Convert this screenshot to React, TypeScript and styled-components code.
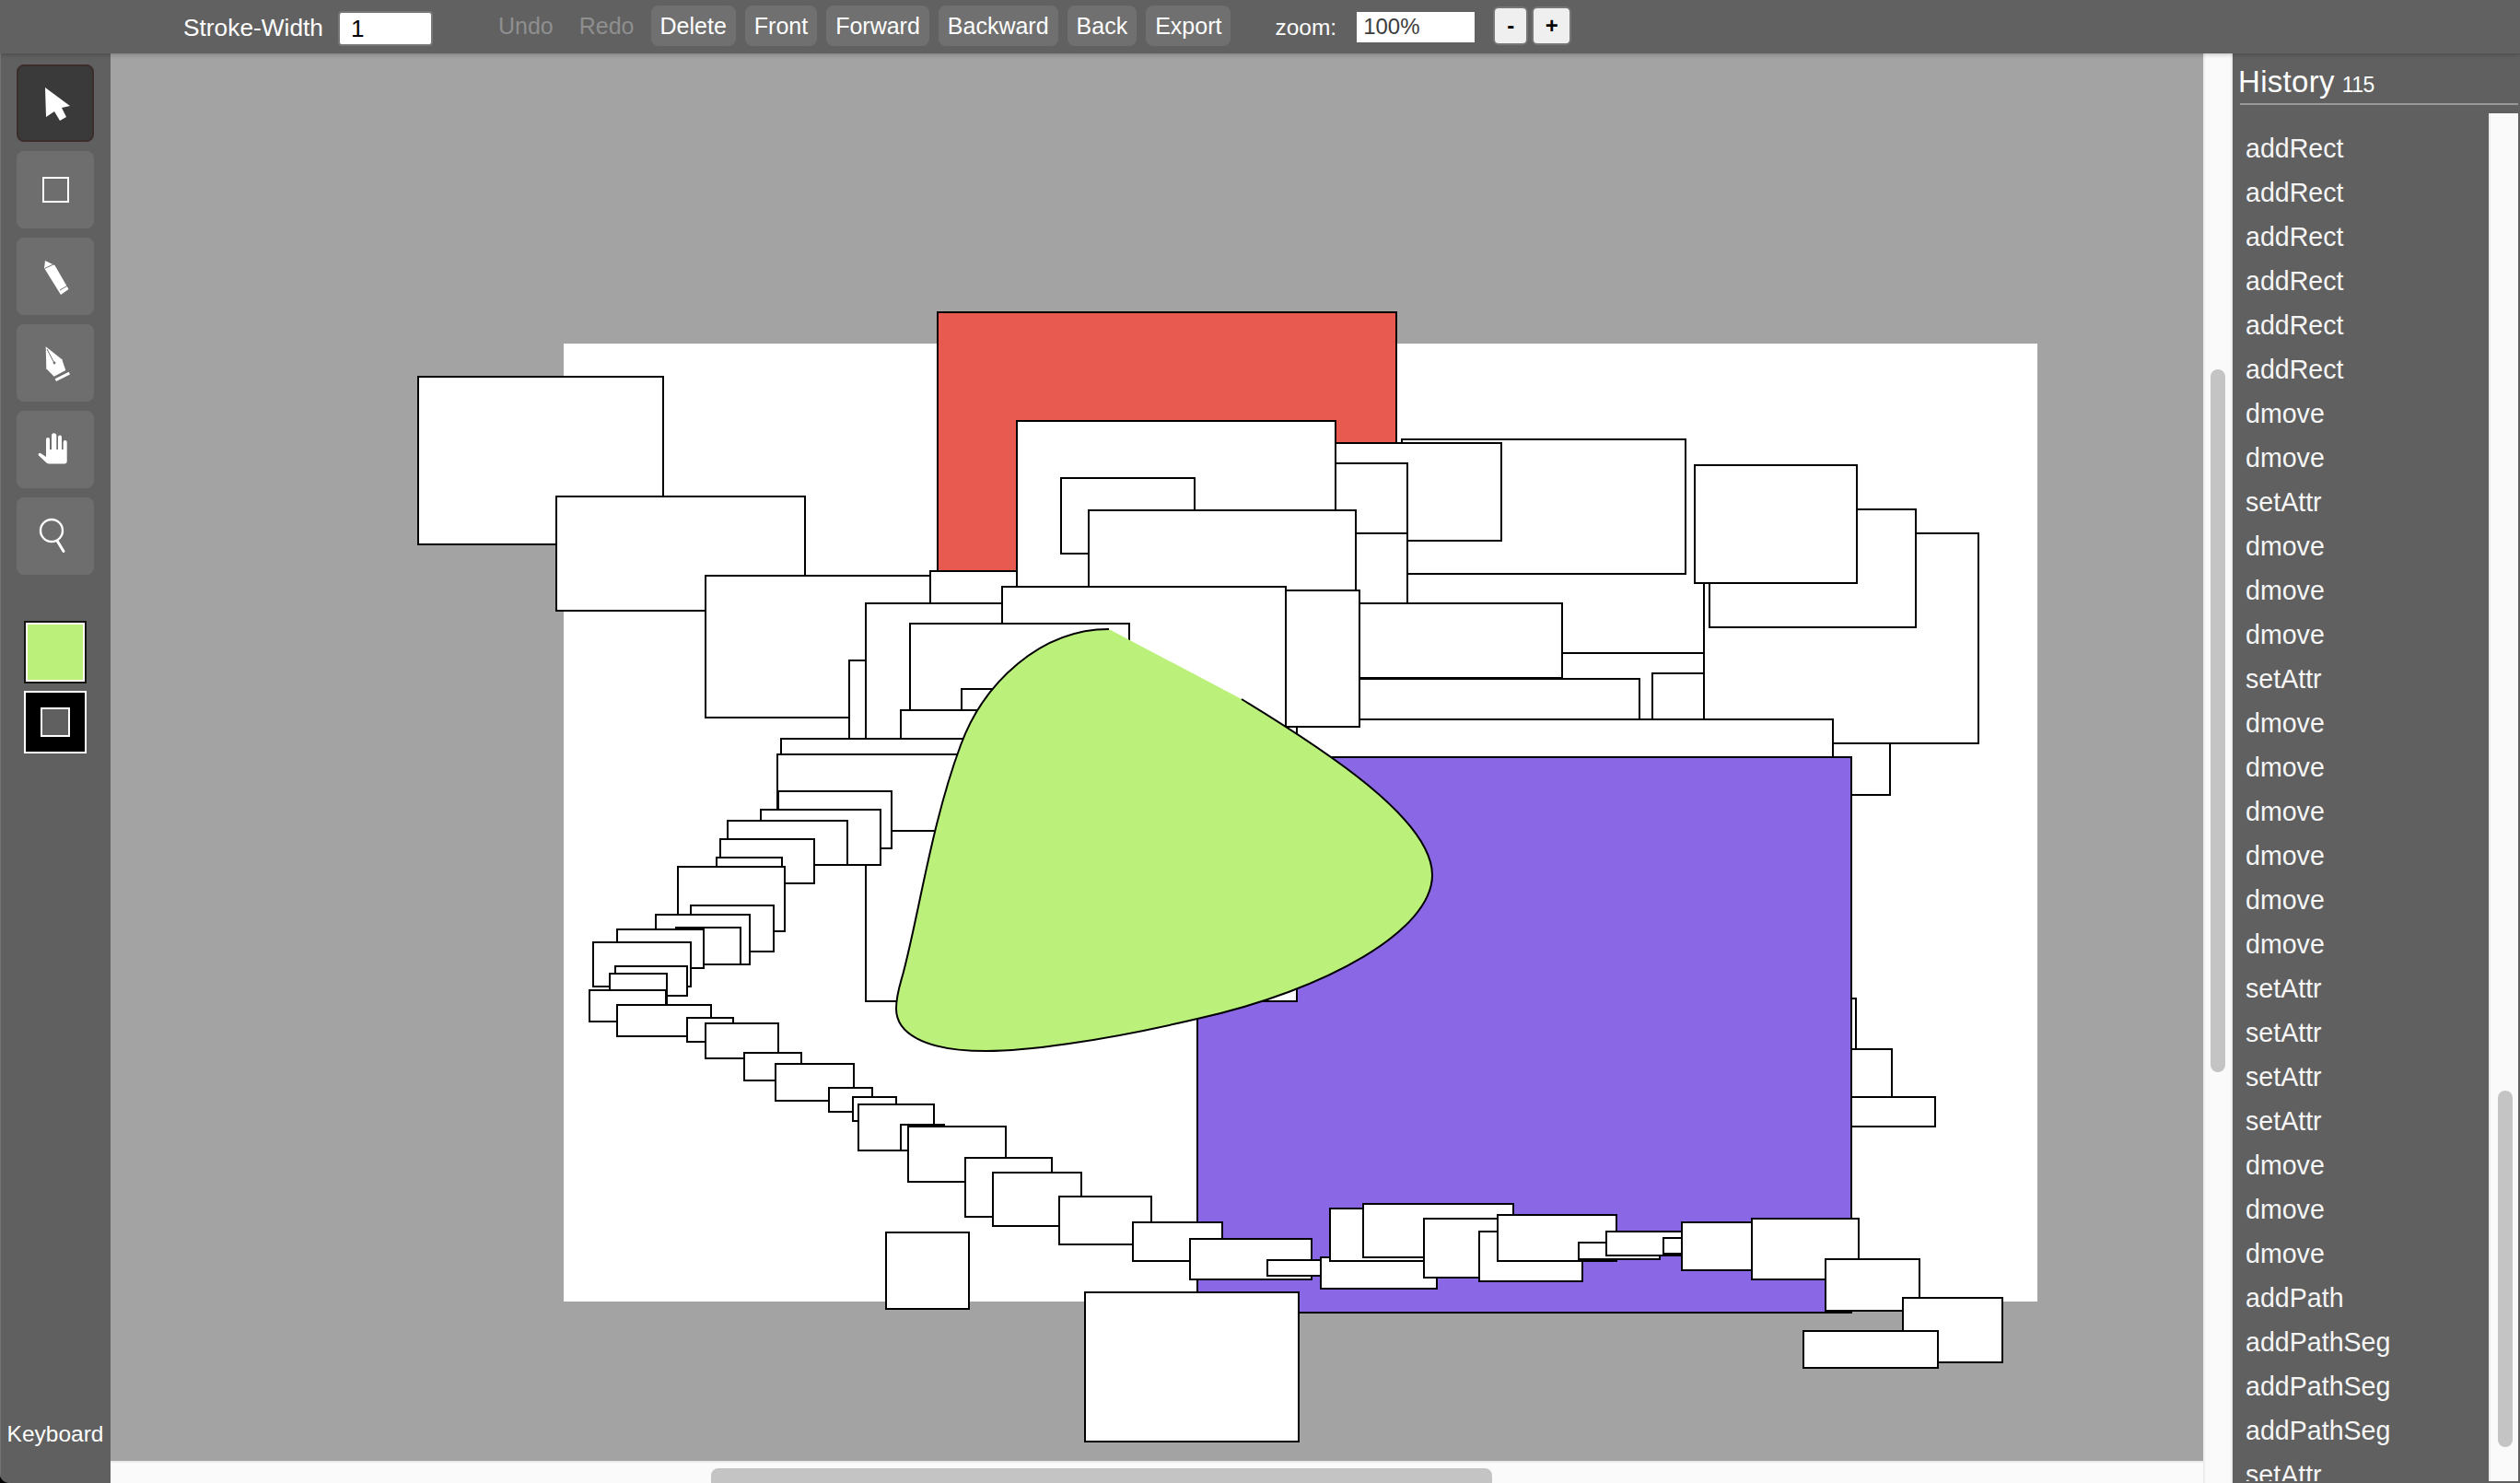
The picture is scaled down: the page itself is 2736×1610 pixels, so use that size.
import React from "react";
import styled, { createGlobalStyle } from "styled-components";

// x1, y1, x2, y2 in page pixels, back to front
type Box = [number, number, number, number];

const backBoxes: Box[] = [
  [454, 409, 720, 591],
  [604, 539, 874, 663],
];
const midBoxes: Box[] = [
  [766, 625, 1020, 779],
  [1010, 620, 1482, 700],
  [1900, 790, 2052, 863],
  [1522, 477, 1830, 623],
  [1400, 481, 1630, 587],
  [1400, 503, 1528, 600],
  [1420, 579, 1528, 680],
  [1500, 709, 1860, 800],
  [1300, 655, 1696, 736],
  [1794, 731, 1860, 800],
  [1850, 579, 2148, 807],
  [1856, 553, 2080, 681],
  [1840, 505, 2016, 633],
  [1300, 737, 1780, 790],
  [1100, 781, 1990, 840],
];
const sideBoxes: Box[] = [
  [1900, 1084, 2015, 1160],
  [1900, 1139, 2054, 1210],
  [1900, 1191, 2101, 1223],
];
const frontBoxes: Box[] = [
  [1104, 457, 1450, 650],
  [1152, 519, 1297, 601],
  [1182, 554, 1472, 680],
  [922, 717, 980, 830],
  [1200, 707, 1284, 790],
  [940, 655, 1408, 1087],
  [1088, 637, 1396, 800],
  [1396, 641, 1476, 789],
  [988, 677, 1226, 780],
  [1044, 748, 1120, 800],
  [978, 771, 1100, 830],
  [848, 802, 1050, 830],
  [844, 819, 1060, 902],
  [845, 859, 968, 921],
  [826, 879, 956, 939],
  [790, 891, 920, 939],
  [782, 911, 884, 959],
  [778, 931, 849, 950],
  [736, 941, 852, 1011],
  [750, 983, 840, 1033],
  [712, 993, 814, 1047],
  [734, 1007, 804, 1047],
  [670, 1009, 764, 1051],
  [644, 1023, 750, 1071],
  [668, 1049, 746, 1081],
  [662, 1057, 724, 1090],
  [640, 1075, 723, 1109],
  [670, 1091, 772, 1125],
  [746, 1105, 796, 1131],
  [766, 1111, 845, 1149],
  [808, 1143, 870, 1173],
  [842, 1155, 927, 1195],
  [900, 1181, 947, 1207],
  [926, 1191, 973, 1217],
  [932, 1199, 1014, 1249],
  [978, 1221, 1025, 1249],
  [986, 1223, 1092, 1283],
  [1048, 1257, 1142, 1321],
  [1078, 1273, 1174, 1331],
  [1150, 1299, 1250, 1351],
  [1230, 1327, 1327, 1369],
  [1292, 1345, 1424, 1389],
  [1376, 1368, 1434, 1385],
  [962, 1338, 1052, 1421],
  [1178, 1403, 1410, 1565],
  [1434, 1365, 1560, 1399],
  [1444, 1312, 1560, 1369],
  [1480, 1307, 1643, 1365],
  [1546, 1323, 1640, 1387],
  [1606, 1337, 1718, 1391],
  [1626, 1319, 1755, 1369],
  [1714, 1349, 1802, 1367],
  [1744, 1337, 1840, 1363],
  [1806, 1344, 1840, 1361],
  [1826, 1327, 1902, 1379],
  [1902, 1323, 2018, 1389],
  [1982, 1367, 2084, 1423],
  [2066, 1409, 2174, 1479],
  [1958, 1445, 2104, 1485],
];

const blobPath =
  "M1348 759 C1440 815 1555 890 1555 950 C1555 1010 1440 1075 1300 1106 C1190 1132 1110 1141 1071 1141 C1000 1141 973 1120 973 1095 C973 1080 977 1070 981 1055 C998 990 1012 892 1043 809 C1068 741 1130 683 1204 683";

const actions = ["Delete", "Front", "Forward", "Backward", "Back", "Export"];

const history = [
  ...Array(6).fill("addRect"),
  "dmove",
  "dmove",
  "setAttr",
  "dmove",
  "dmove",
  "dmove",
  "setAttr",
  ...Array(6).fill("dmove"),
  ...Array(4).fill("setAttr"),
  "dmove",
  "dmove",
  "dmove",
  "addPath",
  "addPathSeg",
  "addPathSeg",
  "addPathSeg",
  "setAttr",
];

const GlobalStyle = createGlobalStyle`
  * {
    box-sizing: border-box;
  }

  html, body {
    margin: 0;
    height: 100%;
    overflow: hidden;
    background: #000;
  }

  #root {
    height: 100%;
  }
`;

const Shell = styled.div`
  height: 100vh;
  display: flex;
  flex-direction: column;
  font-family: "Liberation Sans", Arial, sans-serif;
  color: #fff;
  background: #606060;
  border-bottom-left-radius: 10px;
  overflow: hidden;
`;

const Toolbar = styled.header`
  position: relative;
  z-index: 2;
  flex: 0 0 58px;
  display: flex;
  align-items: center;
  padding-left: 199px;
  background: #616161;
  box-shadow: 0 1px 5px rgba(0, 0, 0, 0.25);
`;

const FieldLabel = styled.label<{ $gap: number; $size: number }>`
  font-size: ${({ $size }) => $size}px;
  margin-left: ${({ $gap }) => $gap}px;
  padding-top: 2px;
`;

const StrokeInput = styled.input`
  width: 103px;
  height: 38px;
  margin: 4px 0 0 16px;
  padding: 0 12px;
  font: 26px "Liberation Sans", Arial, sans-serif;
  color: #000;
  background: #fff;
  border: 2px solid #767676;
  border-radius: 4px;
`;

const ZoomInput = styled.input`
  width: 128px;
  height: 33px;
  margin-left: 22px;
  padding: 0 7px;
  font: 24px "Liberation Sans", Arial, sans-serif;
  color: #3c3c3c;
  background: #fff;
  border: 0;
`;

const ActionGroup = styled.div`
  display: flex;
  gap: 10px;
  margin-left: 61px;
  margin-top: -2px;
`;

const ActionButton = styled.button<{ $off?: boolean }>`
  height: 44px;
  padding: ${({ $off }) => ($off ? "0 8px 0 10px" : "0 10px")};
  font: 25px "Liberation Sans", Arial, sans-serif;
  color: ${({ $off }) => ($off ? "#8f8f8f" : "#fff")};
  background: ${({ $off }) => ($off ? "transparent" : "#707070")};
  border: 0;
  border-radius: 8px;
`;

const StepButton = styled.button<{ $wide?: boolean }>`
  width: ${({ $wide }) => ($wide ? 43 : 38)}px;
  height: 42px;
  margin-top: -2px;
  margin-left: ${({ $wide }) => ($wide ? 4 : 20)}px;
  padding: 0;
  font: bold 24px "Liberation Sans", Arial, sans-serif;
  color: #000;
  background: #efefef;
  border: 2px solid #767676;
  border-radius: 6px;
`;

const Main = styled.div`
  flex: 1;
  min-height: 0;
  display: flex;
`;

const Sidebar = styled.aside`
  flex: 0 0 120px;
  display: flex;
  flex-direction: column;
  align-items: center;
  padding: 12px 0 38px;
  background: #606060;
  box-shadow: inset 1px 0 0 #747474;
`;

const ToolButton = styled.div<{ $active?: boolean }>`
  flex: 0 0 84px;
  width: 84px;
  margin-bottom: 10px;
  background: ${({ $active }) => ($active ? "#3a3a3a" : "#6e6e6e")};
  border: ${({ $active }) => ($active ? "2px solid #3d2c2c" : "0")};
  border-radius: 8px;

  svg {
    display: block;
    margin: ${({ $active }) => ($active ? "-2px" : "0")};
  }
`;

const FillSwatch = styled.div`
  width: 68px;
  height: 68px;
  margin-top: 40px;
  background: #bbf07b;
  border: 4px solid #fff;
  outline: 2px solid #141414;
  outline-offset: -2px;
`;

const StrokeSwatch = styled.div`
  width: 68px;
  height: 68px;
  margin-top: 8px;
  display: flex;
  align-items: center;
  justify-content: center;
  background: #000;
  border: 2px solid #fff;
`;

const StrokeHole = styled.div`
  width: 32px;
  height: 32px;
  background: #606060;
  border: 2px solid #fff;
`;

const KeyboardLabel = styled.div`
  margin-top: auto;
  font-size: 24.5px;
  line-height: 30px;
`;

const CanvasColumn = styled.div`
  flex: 0 0 2272px;
  display: flex;
  flex-direction: column;
`;

const CanvasView = styled.main`
  flex: 1;
  min-height: 0;
  background: #a3a3a3;

  svg {
    display: block;
  }
`;

const HorizontalTrack = styled.div`
  flex: 0 0 24px;
  padding: 6px 0 0 652px;
  background: #fafafa;
  border-top: 2px solid #ececec;
  overflow: hidden;
`;

const HorizontalThumb = styled.div`
  width: 848px;
  height: 24px;
  background: #c4c4c4;
  border-radius: 8px;
`;

const VerticalTrack = styled.div`
  flex: 0 0 30px;
  padding: 343px 6px 0;
  background: #fafafa;
  border-left: 2px solid #ececec;
  border-right: 2px solid #ececec;
`;

const VerticalThumb = styled.div`
  width: 16px;
  height: 763px;
  background: #c4c4c4;
  border-radius: 8px;
`;

const HistoryPanel = styled.aside`
  flex: 1;
  min-width: 0;
  display: flex;
  flex-direction: column;
  padding: 0 2px 2px 8px;
  background: #606060;
`;

const HistoryTitle = styled.h2`
  flex: 0 0 56px;
  margin: 0;
  padding-top: 12px;
  font-size: 33px;
  line-height: 38px;
  font-weight: 400;
  letter-spacing: 0.3px;
  text-indent: -2px;
  border-bottom: 2px solid #999;
`;

const HistoryCount = styled.span`
  margin-left: 8px;
  font-size: 23px;
  letter-spacing: -0.6px;
`;

const HistoryBody = styled.div`
  flex: 1;
  min-height: 0;
  display: flex;
  margin-top: 9px;
`;

const HistoryList = styled.ul`
  flex: 1;
  margin: 0;
  padding: 14px 0 0 6px;
  list-style: none;
  overflow: hidden;
`;

const HistoryItem = styled.li`
  height: 48px;
  font-size: 28.6px;
  line-height: 48px;
  color: #f6f6f6;
`;

const HistoryTrack = styled.div`
  flex: 0 0 30px;
  padding: 1061px 6px 0 8px;
  background: #fafafa;
  border-left: 2px solid #ececec;
`;

const HistoryThumb = styled.div`
  width: 16px;
  height: 387px;
  background: #c4c4c4;
  border-radius: 8px;
`;

const renderBoxes = (boxes: Box[]) =>
  boxes.map(([x1, y1, x2, y2]) => (
    <rect
      key={`${x1}-${y1}-${x2}-${y2}`}
      x={x1}
      y={y1}
      width={x2 - x1}
      height={y2 - y1}
      fill="#fff"
      stroke="#000"
      strokeWidth={2}
    />
  ));

const Drawing = () => (
  <svg width={2272} height={1528} viewBox="120 58 2272 1528" shapeRendering="crispEdges">
    <rect x={612} y={373} width={1600} height={1040} fill="#fff" />
    {renderBoxes(backBoxes)}
    <rect x={1018} y={339} width={498} height={300} fill="#e85a50" stroke="#000" strokeWidth={2} />
    {renderBoxes(midBoxes)}
    {renderBoxes(sideBoxes)}
    <rect x={1300} y={822} width={710} height={603} fill="#8a67e4" stroke="#000" strokeWidth={2} />
    {renderBoxes(frontBoxes)}
    <path d={blobPath} fill="#bbf07b" stroke="#000" strokeWidth={2} shapeRendering="auto" />
  </svg>
);

const Icon = ({ children }: { children: React.ReactNode }) => (
  <svg width={84} height={84} viewBox="0 0 84 84">
    {children}
  </svg>
);

const Tools = () => (
  <>
    <ToolButton $active>
      <Icon>
        <polygon points="31,25 58,45 49,47 54,57 47,61 41,51 32,57" fill="#fff" />
      </Icon>
    </ToolButton>
    <ToolButton>
      <Icon>
        <rect x={29} y={29} width={27} height={26} fill="none" stroke="#fff" strokeWidth={2} />
      </Icon>
    </ToolButton>
    <ToolButton>
      <Icon>
        <polygon points="31,25 41.5,30 56.5,56 48,62 30,33" fill="#fff" />
        <path d="M30.5 33.5 L41 28.5 M47 57 L55.5 52" stroke="#6e6e6e" strokeWidth={1} />
      </Icon>
    </ToolButton>
    <ToolButton>
      <Icon>
        <path d="M31.7 24.3 L49.3 38.3 L53.3 50 L40.7 56.7 L32.3 48.3 Z" fill="#fff" />
        <path d="M33 27 L40.7 41.7" stroke="#6e6e6e" strokeWidth={1} />
        <circle cx={41} cy={42} r={1.4} fill="#6e6e6e" />
        <polygon points="41.7,59.3 56.7,51.7 58,54.5 43,62" fill="#fff" />
      </Icon>
    </ToolButton>
    <ToolButton>
      <Icon>
        <path
          d="M32 31 a2 2 0 0 1 4 0 V42 H38 V27 a2.6 2.6 0 0 1 5.3 0 V42 H45 V28.5 a2 2 0 0 1 4 0 V42 H50.7 V34 a2 2 0 0 1 4 0 V55 a2.4 2.4 0 0 1 -2.4 2.4 H35 a4 4 0 0 1 -3 -1.4 L24 48.5 a1.6 1.6 0 0 1 2.4 -2.2 L32 50 Z"
          fill="#fff"
        />
      </Icon>
    </ToolButton>
    <ToolButton>
      <Icon>
        <circle cx={38} cy={36} r={12} fill="none" stroke="#fff" strokeWidth={2.4} />
        <line x1={44} y1={47} x2={51} y2={58.5} stroke="#fff" strokeWidth={3} strokeLinecap="round" />
      </Icon>
    </ToolButton>
  </>
);

const App = () => (
  <>
    <GlobalStyle />
    <Shell>
      <Toolbar>
        <FieldLabel $gap={0} $size={26.3}>
          Stroke-Width
        </FieldLabel>
        <StrokeInput readOnly value="1" />
        <ActionGroup>
          <ActionButton $off>Undo</ActionButton>
          <ActionButton $off>Redo</ActionButton>
          {actions.map((name) => (
            <ActionButton key={name}>{name}</ActionButton>
          ))}
        </ActionGroup>
        <FieldLabel $gap={48} $size={24.5}>
          zoom:
        </FieldLabel>
        <ZoomInput readOnly value="100%" />
        <StepButton>-</StepButton>
        <StepButton $wide>+</StepButton>
      </Toolbar>
      <Main>
        <Sidebar>
          <Tools />
          <FillSwatch />
          <StrokeSwatch>
            <StrokeHole />
          </StrokeSwatch>
          <KeyboardLabel>Keyboard</KeyboardLabel>
        </Sidebar>
        <CanvasColumn>
          <CanvasView>
            <Drawing />
          </CanvasView>
          <HorizontalTrack>
            <HorizontalThumb />
          </HorizontalTrack>
        </CanvasColumn>
        <VerticalTrack>
          <VerticalThumb />
        </VerticalTrack>
        <HistoryPanel>
          <HistoryTitle>
            History<HistoryCount>115</HistoryCount>
          </HistoryTitle>
          <HistoryBody>
            <HistoryList>
              {history.map((name, index) => (
                <HistoryItem key={index}>{name}</HistoryItem>
              ))}
            </HistoryList>
            <HistoryTrack>
              <HistoryThumb />
            </HistoryTrack>
          </HistoryBody>
        </HistoryPanel>
      </Main>
    </Shell>
  </>
);

export default App;
